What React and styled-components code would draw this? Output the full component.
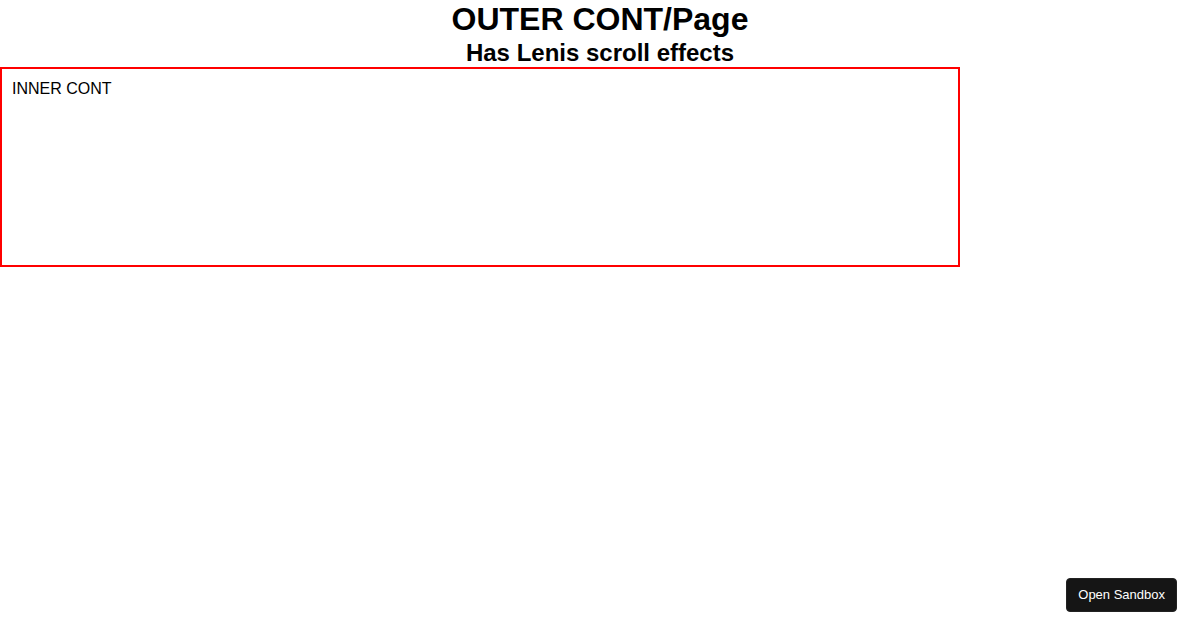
import React from "react";
import styled, { createGlobalStyle } from "styled-components";

const GlobalStyle = createGlobalStyle`
  * { margin: 0; padding: 0; box-sizing: border-box; }
  body {
    background: #fff;
    color: #000;
    font-family: "Liberation Sans", Arial, Helvetica, sans-serif;
    font-size: 16px;
  }
`;

const Page = styled.main`
  min-height: 100vh;
`;

const Title = styled.h1`
  font-size: 32px;
  line-height: 38px;
  text-align: center;
`;

const Subtitle = styled.h2`
  font-size: 24px;
  line-height: 29px;
  text-align: center;
`;

const InnerContainer = styled.section`
  width: 80%;
  height: 200px;
  padding: 10px;
  border: 2px solid #f00;
  overflow: auto;
  line-height: 20px;
`;

const SandboxButton = styled.button`
  position: fixed;
  right: 23px;
  bottom: 18px;
  height: 34px;
  padding: 0 11px;
  border: 1px solid #222;
  border-radius: 4px;
  background: #151515;
  color: #fff;
  font-family: inherit;
  font-size: 13px;
  line-height: 16px;
  cursor: pointer;
`;

export default function App() {
  return (
    <>
      <GlobalStyle />
      <Page>
        <Title>OUTER CONT/Page</Title>
        <Subtitle>Has Lenis scroll effects</Subtitle>
        <InnerContainer>INNER CONT</InnerContainer>
      </Page>
      <SandboxButton type="button">Open Sandbox</SandboxButton>
    </>
  );
}
